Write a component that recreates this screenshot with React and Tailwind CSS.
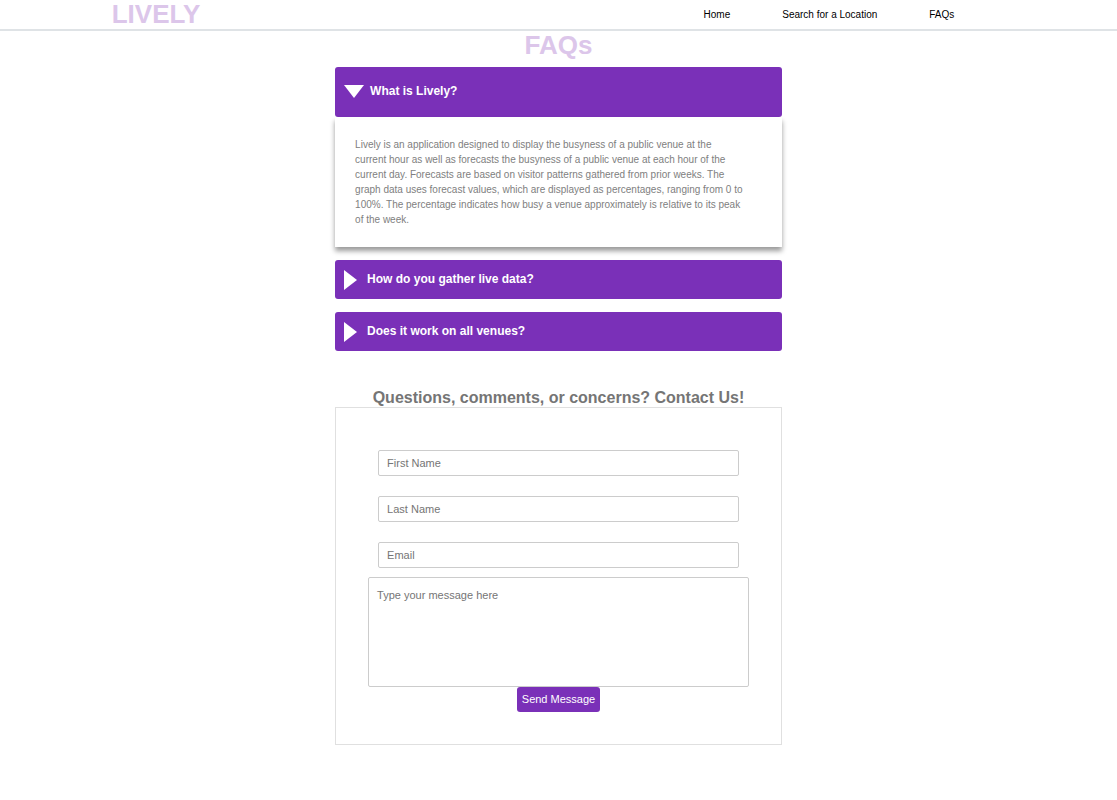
import { useState } from "react";

const links = [
  { label: "Home", href: "#home" },
  { label: "Search for a Location", href: "#search" },
  { label: "FAQs", href: "#faqs" },
];

const faqs = [
  {
    question: "What is Lively?",
    answer: `Lively is an application designed to display the busyness of a public venue at the
current hour as well as forecasts the busyness of a public venue at each hour of the
current day. Forecasts are based on visitor patterns gathered from prior weeks. The
graph data uses forecast values, which are displayed as percentages, ranging from 0 to
100%. The percentage indicates how busy a venue approximately is relative to its peak
of the week.`,
  },
  {
    question: "How do you gather live data?",
    answer: "Live data is gathered from visitors at each venue.",
  },
  {
    question: "Does it work on all venues?",
    answer: "It works on venues with enough visitors to make a forecast.",
  },
];

const fields = [
  { id: "firstName", label: "First Name", type: "text" },
  { id: "lastName", label: "Last Name", type: "text" },
  { id: "email", label: "Email", type: "email" },
];

function Navbar() {
  return (
    <header className="flex h-[31px] items-start border-b-2 border-[#dfe3e6] px-[10%]">
      <a href="#home" className="text-[26px] leading-7 font-bold text-[#dcc6ea]">
        LIVELY
      </a>
      <nav className="mr-[51px] ml-auto flex gap-[52px] self-center">
        {links.map((link) => (
          <a key={link.label} href={link.href} className="text-black">
            {link.label}
          </a>
        ))}
      </nav>
    </header>
  );
}

function FaqItem({ question, answer, open, onToggle }) {
  return (
    <div>
      <button
        type="button"
        aria-expanded={open}
        onClick={onToggle}
        className={`flex w-full items-center rounded-[3px] bg-[#7a30b8] px-[9px] text-left text-[12px] font-bold text-white ${
          open ? "h-[50px] gap-[6px] pb-[2px]" : "h-[39px] gap-[10px]"
        }`}
      >
        {open ? (
          <svg width="20" height="13" viewBox="0 0 20 13" fill="currentColor">
            <path d="M0 0h20L10 13z" />
          </svg>
        ) : (
          <svg width="13" height="20" viewBox="0 0 13 20" fill="currentColor">
            <path d="M0 0v20l13-10z" />
          </svg>
        )}
        {question}
      </button>
      {open && (
        <p className="p-5 whitespace-pre-line text-[#808080] shadow-[0_4px_5px_rgba(0,0,0,0.4)]">
          {answer}
        </p>
      )}
    </div>
  );
}

function ContactForm() {
  const handleSubmit = (e) => {
    e.preventDefault();
  };

  return (
    <form
      onSubmit={handleSubmit}
      className="flex flex-col items-center border border-[#e0e0e0] px-8 pt-[42px] pb-8 text-[11px]"
    >
      <div className="flex w-full flex-col gap-5 px-[10px]">
        {fields.map((field) => (
          <input
            key={field.id}
            id={field.id}
            type={field.type}
            aria-label={field.label}
            placeholder={field.label}
            className="h-[26px] rounded-[2px] border border-[#cccccc] px-2 placeholder:text-[#757575]"
          />
        ))}
      </div>
      <textarea
        id="message"
        aria-label="Message"
        placeholder="Type your message here"
        className="mt-[9px] block h-[110px] w-full resize-none rounded-[2px] border border-[#cccccc] px-2 py-[10px] placeholder:text-[#757575]"
      />
      <button type="submit" className="h-[25px] rounded-[3px] bg-[#7a30b8] px-[5px] text-white">
        Send Message
      </button>
    </form>
  );
}

export default function App() {
  const [openIndex, setOpenIndex] = useState(0);

  return (
    <div className="min-h-screen bg-white font-['Liberation_Sans',Arial,sans-serif] text-[10px] leading-[15px]">
      <Navbar />

      <main className="mx-auto w-2/5">
        <h1 className="text-center text-[26px] leading-[29px] font-bold text-[#dcc6ea]">FAQs</h1>

        <section className="mt-[7px] flex flex-col gap-[13px]">
          {faqs.map((faq, i) => (
            <FaqItem
              key={faq.question}
              question={faq.question}
              answer={faq.answer}
              open={openIndex === i}
              onToggle={() => setOpenIndex(openIndex === i ? -1 : i)}
            />
          ))}
        </section>

        <h2 className="mt-[37px] text-center text-[16px] leading-[19px] font-bold whitespace-nowrap text-[#757575]">
          Questions, comments, or concerns? Contact Us!
        </h2>
        <ContactForm />
      </main>
    </div>
  );
}
